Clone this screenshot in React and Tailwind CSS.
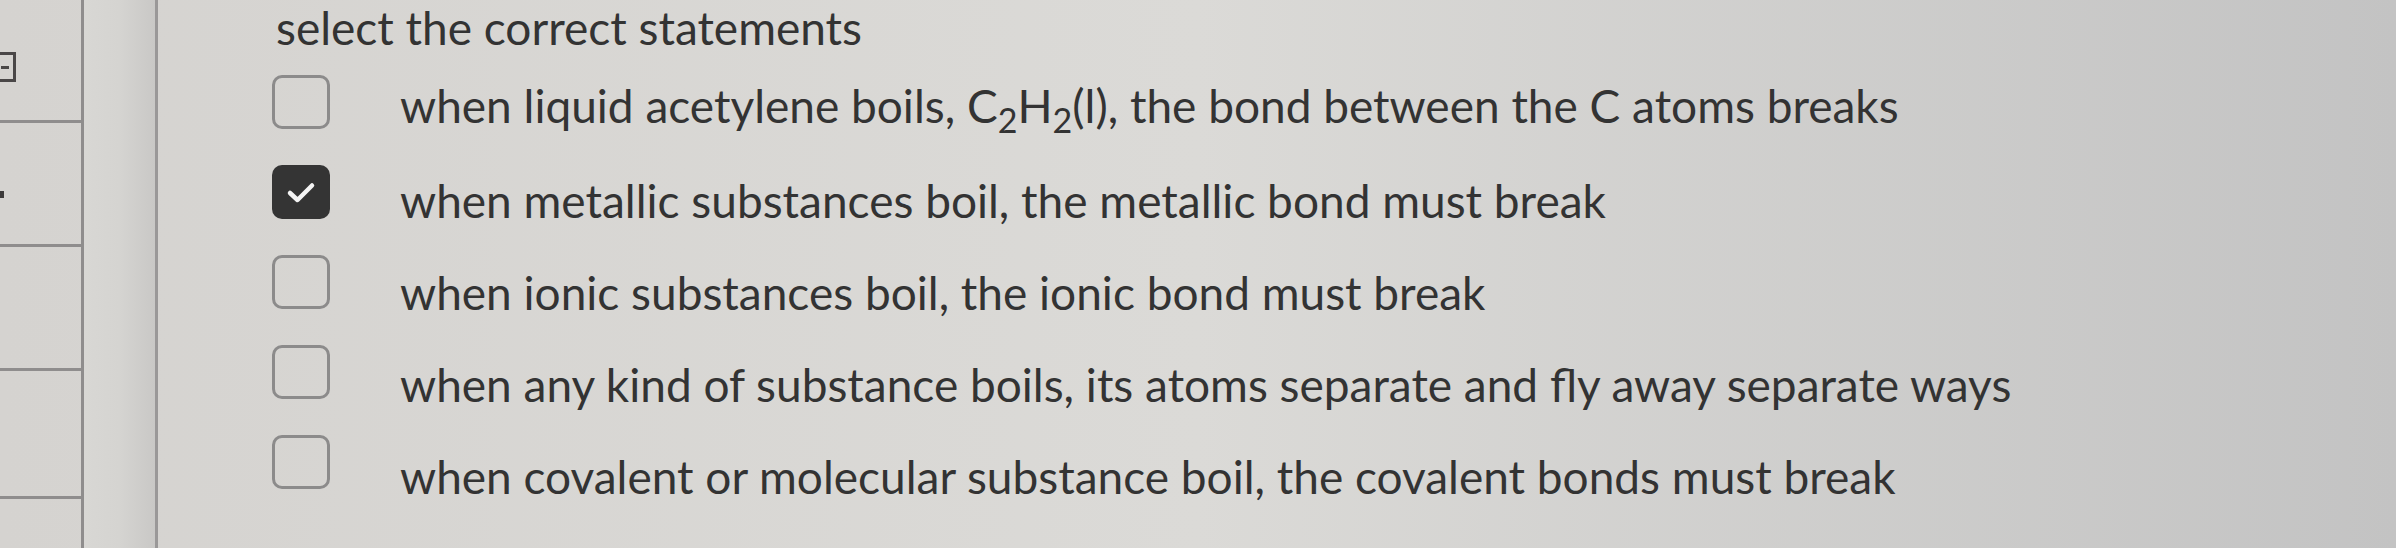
import React from 'react';

const Sub = ({ children }) => (
  <span className="text-[0.74em] relative top-[0.3em] leading-none">{children}</span>
);

// pad nudges each line a little lower, as the photo drifts down the page
const options = [
  { id: 1, checked: false, pad: 'pt-[8px]', text: <>when liquid acetylene boils, C<Sub>2</Sub>H<Sub>2</Sub>(l), the bond between the C atoms breaks</> },
  { id: 2, checked: true, pad: 'pt-[18px]', text: 'when metallic substances boil, the metallic bond must break' },
  { id: 3, checked: false, pad: 'pt-[22px]', text: 'when ionic substances boil, the ionic bond must break' },
  { id: 4, checked: false, pad: 'pt-[26px]', text: 'when any kind of substance boils, its atoms separate and fly away separate ways' },
  { id: 5, checked: false, pad: 'pt-[30px]', text: 'when covalent or molecular substance boil, the covalent bonds must break' },
];

const Checkbox = ({ checked }) => {
  if (checked) {
    return (
      <div className="w-[58px] h-[54px] rounded-[10px] bg-[#343434] flex items-center justify-center shrink-0">
        <svg width="34" height="26" viewBox="0 0 34 26" fill="none">
          <path d="M6 14l7.5 7L28 6.5" stroke="#f4f4f4" strokeWidth="4.5" strokeLinecap="round" strokeLinejoin="round" />
        </svg>
      </div>
    );
  }
  return <div className="w-[58px] h-[54px] rounded-[10px] border-[3px] border-[#8c8b8b] shrink-0" />;
};

const App = () => {
  return (
    <div
      className="w-[2396px] h-[548px] flex overflow-hidden bg-linear-to-r from-[#d5d3d0] via-[#dbdad7] to-[#c3c3c3] text-[#333333]"
      style={{ fontFamily: 'Lato, "Open Sans", sans-serif' }}
    >
      {/* left nav column */}
      <div className="w-[84px] shrink-0 border-r-[3px] border-[#8f8d8d] flex flex-col">
        <div className="h-[123px] border-b-[3px] border-[#8f8d8d] pt-[52px]">
          <div className="w-[30px] h-[30px] -ml-[14px] border-[3px] border-[#4a4747] flex items-center justify-end pr-[4px]">
            <div className="w-[8px] h-[3px] bg-[#4a4747]" />
          </div>
        </div>
        <div className="h-[124px] border-b-[3px] border-[#8f8d8d] pt-[68px]">
          <div className="w-[4px] h-[7px] bg-[#3c3a3a]" />
        </div>
        <div className="h-[124px] border-b-[3px] border-[#8f8d8d]" />
        <div className="h-[128px] border-b-[3px] border-[#8f8d8d]" />
        <div className="flex-1" />
      </div>

      {/* narrow strip */}
      <div className="w-[74px] shrink-0 bg-linear-to-r from-[#d8d7d4] via-[#d5d4d1] to-[#c9c8c6] border-r-[3px] border-[#9a9898]" />

      {/* question */}
      <div className="flex-1 flex flex-col pl-[114px]">
        <div className="h-[57px] pl-[4px] text-[46px] leading-[1.2] whitespace-nowrap">select the correct statements</div>
        {options.map((o) => (
          <div key={o.id} className="h-[90px] flex items-center">
            <Checkbox checked={o.checked} />
            <div className={`ml-[70px] text-[46px] leading-[46px] whitespace-nowrap ${o.pad}`}>{o.text}</div>
          </div>
        ))}
      </div>
    </div>
  );
};

export default App;
